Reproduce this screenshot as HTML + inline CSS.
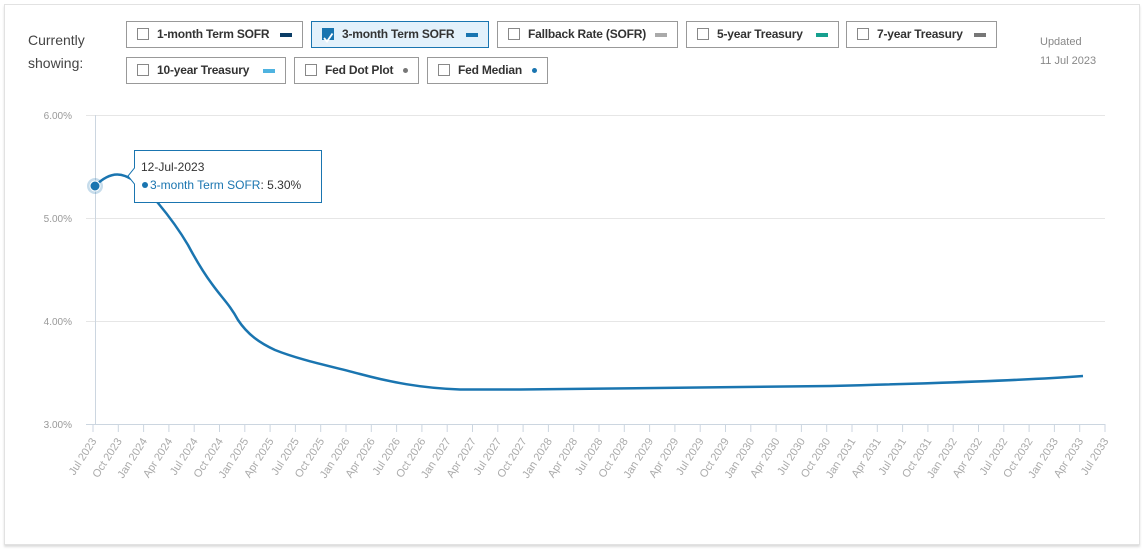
<!DOCTYPE html>
<html><head><style>
body{margin:0;width:1145px;height:551px;background:#fff;font-family:"Liberation Sans",sans-serif;position:relative;overflow:hidden}
.frame{position:absolute;left:4px;top:4px;width:1134px;height:539px;border:1px solid #e2e2e2;box-shadow:0 2px 2px #ddd}
.lbl{position:absolute;left:28px;top:29px;font-size:14px;color:#444;line-height:23px}
.b{position:absolute;height:27px;border:1px solid #999;box-sizing:border-box;font-size:12px;font-weight:bold;color:#333;line-height:24px;padding-left:30px;white-space:nowrap;letter-spacing:-0.2px}
.b:before{content:"";position:absolute;left:10px;top:6px;width:10px;height:10px;border:1px solid #888;background:#fff}
.b.on{background:#e3f1fb;border-color:#1a75b0}
.b.on:before{display:none}
.chk{position:absolute;left:10px;top:6px;width:12px;height:12px;background:#1a75b0}
.sw{position:absolute;right:10px;top:11px;width:12px;height:4px}
.dot{position:absolute;right:10px;top:10px;width:5px;height:5px;border-radius:50%}
.upd{position:absolute;left:1040px;top:33px;font-size:11px;color:#888;line-height:19px}
</style></head><body>
<div class="frame"></div>
<div class="lbl">Currently<br>showing:</div>
<div class="b" style="left:126px;top:21px;width:177px">1-month Term SOFR<span class="sw" style="background:#0b3d66"></span></div>
<div class="b on" style="left:311px;top:21px;width:178px"><span class="chk"><svg width="12" height="12"><path d="M2,6 L5,9.5 L10.5,1.5" fill="none" stroke="#fff" stroke-width="1.8"/></svg></span>3-month Term SOFR<span class="sw" style="background:#1a75b0"></span></div>
<div class="b" style="left:497px;top:21px;width:181px">Fallback Rate (SOFR)<span class="sw" style="background:#aaa"></span></div>
<div class="b" style="left:686px;top:21px;width:153px">5-year Treasury<span class="sw" style="background:#16a08f"></span></div>
<div class="b" style="left:846px;top:21px;width:151px">7-year Treasury<span class="sw" style="background:#777"></span></div>
<div class="b" style="left:126px;top:57px;width:160px">10-year Treasury<span class="sw" style="background:#4fb3e0"></span></div>
<div class="b" style="left:294px;top:57px;width:125px">Fed Dot Plot<span class="dot" style="background:#777"></span></div>
<div class="b" style="left:427px;top:57px;width:121px">Fed Median<span class="dot" style="background:#1a75b0"></span></div>
<div class="upd">Updated<br>11 Jul 2023</div>
<svg style="position:absolute;left:0;top:0" width="1145" height="551">
<g stroke="#e6e6e6" stroke-width="1">
<line x1="86" y1="115.5" x2="1105" y2="115.5"/><line x1="86" y1="218.5" x2="1105" y2="218.5"/><line x1="86" y1="321.5" x2="1105" y2="321.5"/>
</g>
<line x1="95.5" y1="115" x2="95.5" y2="424" stroke="#ccd6e0"/>
<line x1="86" y1="424.5" x2="1105" y2="424.5" stroke="#ccd6e0"/>
<g font-size="10" fill="#999" text-anchor="end">
<text x="72" y="119">6.00%</text><text x="72" y="222">5.00%</text><text x="72" y="325">4.00%</text><text x="72" y="428">3.00%</text>
</g>
<g id="ticks" stroke="#ccd6e0"></g>
<g id="xl" font-size="11" fill="#aaa" text-anchor="end"></g>
<path d="M95,186 C105,176 115,172 125,176 C140,182 150,192 158,203 C168,215 178,228 188,245 C196,260 203,272 212,284 C222,298 230,305 238,320 C248,335 260,343 275,350 C300,360 330,366 360,374 C390,382 420,388 460,389.5 L520,389.5 C600,388 700,387 830,386 C950,383 1030,380 1083,376" fill="none" stroke="#1a75b0" stroke-width="2.5"/>
<circle cx="95" cy="186" r="8" fill="#1a75b0" opacity="0.25"/>
<circle cx="95" cy="186" r="5" fill="#1a75b0" stroke="#fff" stroke-width="1"/>
<path d="M134.5,150.5 H321.5 V202.5 H134.5 V184 L128,176 L134.5,168 Z" fill="#fff" stroke="#1a75b0"/>
<text x="141" y="171" font-size="12" fill="#333">12-Jul-2023</text>
<circle cx="145" cy="185" r="3" fill="#1a75b0"/>
<text x="150" y="189" font-size="12"><tspan fill="#1a75b0">3-month Term SOFR</tspan><tspan fill="#333">: 5.30%</tspan></text>
</svg>
<script>
var m=["Jul","Oct","Jan","Apr"],y=2023,t="",l="";
for(var i=0;i<41;i++){var x=93+i*25.3;var mm=m[i%4];if(i%4==2)y++;
t+='<line x1="'+x+'" y1="424" x2="'+x+'" y2="432"/>';
l+='<text transform="translate('+(x+4)+',441) rotate(-57)">'+mm+' '+y+'</text>';}
document.getElementById("ticks").innerHTML=t;document.getElementById("xl").innerHTML=l;
</script>
</body></html>
